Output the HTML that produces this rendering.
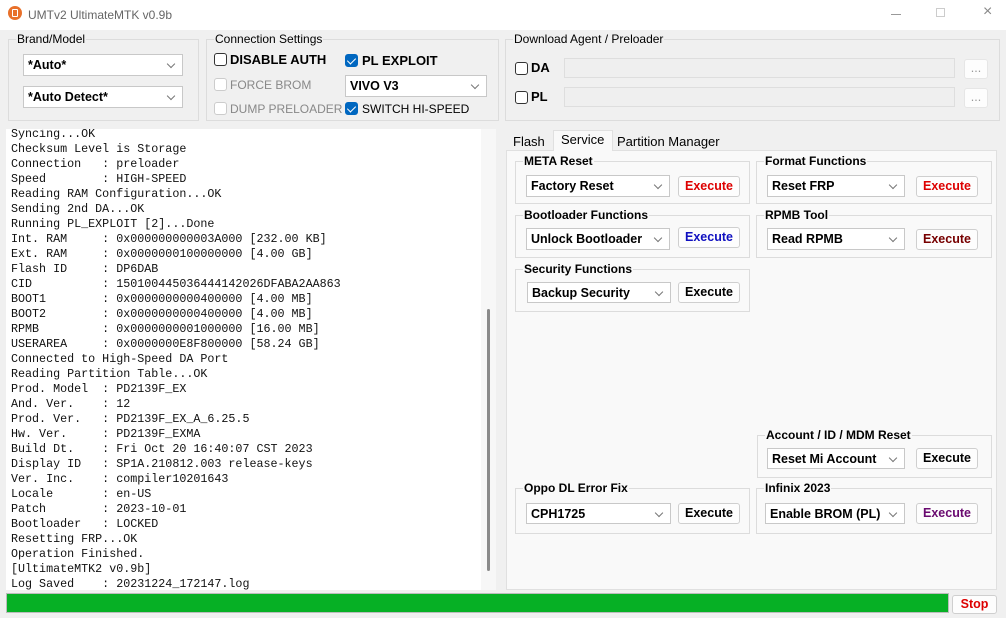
<!DOCTYPE html>
<html><head><meta charset="utf-8"><style>
*{box-sizing:border-box;margin:0;padding:0}
body{width:1006px;height:618px;background:#f0f0f0;font-family:"Liberation Sans",sans-serif;font-size:12px;position:relative;overflow:hidden;color:#000}
.a{position:absolute}
.grp{position:absolute;border:1px solid #dcdcdc}
.gt{position:absolute;top:-8px;left:7px;background:#f0f0f0;padding:0 1px;font-size:12px;line-height:14px;white-space:nowrap}
.wp .gt{background:#f9f9f9;font-weight:bold}
.cb{position:absolute;background:#fff;border:1px solid #c8c8c8;font-weight:bold;font-size:12.5px;line-height:20px;padding-left:4px;white-space:nowrap}
.cb:after{content:"";position:absolute;right:8px;top:6px;width:5px;height:5px;border-right:1px solid #777;border-bottom:1px solid #777;transform:rotate(45deg)}
.btn{position:absolute;background:#fdfdfd;border:1px solid #cfcfcf;border-radius:3px;font-weight:bold;font-size:12.5px;text-align:center;line-height:19px}
.chk{position:absolute;width:13px;height:13px;border:1px solid #333;border-radius:3px;background:#fff}
.chk.on{background:#0067c0;border-color:#0067c0}
.chk.on:after{content:"";position:absolute;left:3px;top:1px;width:4px;height:7px;border-right:1.5px solid #fff;border-bottom:1.5px solid #fff;transform:rotate(45deg)}
.chk.dis{border-color:#ccc}
.lbl{position:absolute;font-size:12px;white-space:nowrap;line-height:14px}
#log{position:absolute;left:6px;top:129px;width:490px;height:461px;background:#fff;overflow:hidden}
#log pre{position:absolute;left:5px;top:-2px;font-family:"Liberation Mono",monospace;font-size:11.7px;line-height:15px;color:#111}
</style></head><body>
<div class="a" style="left:0;top:0;width:1006px;height:30px;background:#fff"></div>
<div class="a" style="left:8px;top:6px;width:14px;height:14px;border-radius:50%;background:#e8702a"></div>
<div class="a" style="left:12px;top:9px;width:6px;height:8px;border:1.5px solid #fff;border-radius:1px"></div>
<div class="lbl" style="left:28px;top:8px;font-size:12px;color:#666">UMTv2 UltimateMTK v0.9b</div>
<div class="a" style="left:891px;top:14px;width:10px;height:1px;background:#999"></div>
<div class="a" style="left:936px;top:8px;width:9px;height:9px;border:1px solid #ccc"></div>
<div class="lbl" style="left:983px;top:5px;font-size:16px;color:#888">×</div>

<div class="grp" style="left:8px;top:39px;width:191px;height:82px"><span class="gt">Brand/Model</span></div>
<div class="cb" style="left:23px;top:54px;width:160px;height:22px">*Auto*</div>
<div class="cb" style="left:23px;top:86px;width:160px;height:22px">*Auto Detect*</div>

<div class="grp" style="left:206px;top:39px;width:293px;height:82px"><span class="gt">Connection Settings</span></div>
<div class="chk" style="left:214px;top:53px"></div><div class="lbl" style="left:230px;top:53px;font-weight:bold;font-size:13px">DISABLE AUTH</div>
<div class="chk dis" style="left:214px;top:78px"></div><div class="lbl" style="left:230px;top:78px;color:#888">FORCE BROM</div>
<div class="chk dis" style="left:214px;top:102px"></div><div class="lbl" style="left:230px;top:102px;color:#888">DUMP PRELOADER</div>
<div class="chk on" style="left:345px;top:54px"></div><div class="lbl" style="left:362px;top:54px;font-weight:bold;font-size:13px">PL EXPLOIT</div>
<div class="cb" style="left:345px;top:75px;width:142px;height:22px">VIVO V3</div>
<div class="chk on" style="left:345px;top:102px"></div><div class="lbl" style="left:362px;top:102px">SWITCH HI-SPEED</div>

<div class="grp" style="left:505px;top:39px;width:495px;height:82px"><span class="gt">Download Agent / Preloader</span></div>
<div class="chk" style="left:515px;top:62px"></div><div class="lbl" style="left:531px;top:61px;font-weight:bold;font-size:13px">DA</div>
<div class="chk" style="left:515px;top:91px"></div><div class="lbl" style="left:531px;top:90px;font-weight:bold;font-size:13px">PL</div>
<div class="a" style="left:564px;top:58px;width:391px;height:20px;border:1px solid #dedede;background:#efefef"></div>
<div class="a" style="left:564px;top:87px;width:391px;height:20px;border:1px solid #dedede;background:#efefef"></div>
<div class="btn" style="left:964px;top:59px;width:24px;height:20px;border-color:#e6e6e6;color:#999;font-weight:normal;line-height:16px">...</div>
<div class="btn" style="left:964px;top:88px;width:24px;height:20px;border-color:#e6e6e6;color:#999;font-weight:normal;line-height:16px">...</div>

<div id="log"><pre>Syncing...OK
Checksum Level is Storage
Connection   : preloader
Speed        : HIGH-SPEED
Reading RAM Configuration...OK
Sending 2nd DA...OK
Running PL_EXPLOIT [2]...Done
Int. RAM     : 0x000000000003A000 [232.00 KB]
Ext. RAM     : 0x0000000100000000 [4.00 GB]
Flash ID     : DP6DAB
CID          : 150100445036444142026DFABA2AA863
BOOT1        : 0x0000000000400000 [4.00 MB]
BOOT2        : 0x0000000000400000 [4.00 MB]
RPMB         : 0x0000000001000000 [16.00 MB]
USERAREA     : 0x0000000E8F800000 [58.24 GB]
Connected to High-Speed DA Port
Reading Partition Table...OK
Prod. Model  : PD2139F_EX
And. Ver.    : 12
Prod. Ver.   : PD2139F_EX_A_6.25.5
Hw. Ver.     : PD2139F_EXMA
Build Dt.    : Fri Oct 20 16:40:07 CST 2023
Display ID   : SP1A.210812.003 release-keys
Ver. Inc.    : compiler10201643
Locale       : en-US
Patch        : 2023-10-01
Bootloader   : LOCKED
Resetting FRP...OK
Operation Finished.
[UltimateMTK2 v0.9b]
Log Saved    : 20231224_172147.log</pre>
<div class="a" style="left:475px;top:0;width:15px;height:461px;background:#f7f7f7"></div>
<div class="a" style="left:481px;top:180px;width:3px;height:262px;background:#8a8a8a;border-radius:2px"></div>
</div>

<div class="a" style="left:506px;top:150px;width:491px;height:440px;background:#f9f9f9;border:1px solid #e0e0e0"></div>
<div class="a" style="left:553px;top:130px;width:60px;height:21px;background:#f9f9f9;border:1px solid #e0e0e0;border-bottom:none"></div>
<div class="lbl" style="left:513px;top:135px;font-size:13px">Flash</div>
<div class="lbl" style="left:561px;top:133px;font-size:13px">Service</div>
<div class="lbl" style="left:617px;top:135px;font-size:13px">Partition Manager</div>

<div class="wp">
<div class="grp" style="left:515px;top:161px;width:235px;height:43px"><span class="gt">META Reset</span></div>
<div class="cb" style="left:526px;top:175px;width:144px;height:22px">Factory Reset</div>
<div class="btn" style="left:678px;top:176px;width:62px;height:21px;color:#d00">Execute</div>

<div class="grp" style="left:756px;top:161px;width:236px;height:43px"><span class="gt">Format Functions</span></div>
<div class="cb" style="left:767px;top:175px;width:138px;height:22px">Reset FRP</div>
<div class="btn" style="left:916px;top:176px;width:62px;height:21px;color:#d00">Execute</div>

<div class="grp" style="left:515px;top:215px;width:235px;height:43px"><span class="gt">Bootloader Functions</span></div>
<div class="cb" style="left:526px;top:228px;width:144px;height:22px">Unlock Bootloader</div>
<div class="btn" style="left:678px;top:227px;width:62px;height:21px;color:#1010c0">Execute</div>

<div class="grp" style="left:756px;top:215px;width:236px;height:43px"><span class="gt">RPMB Tool</span></div>
<div class="cb" style="left:767px;top:228px;width:138px;height:22px">Read RPMB</div>
<div class="btn" style="left:916px;top:229px;width:62px;height:21px;color:#700">Execute</div>

<div class="grp" style="left:515px;top:269px;width:235px;height:43px"><span class="gt">Security Functions</span></div>
<div class="cb" style="left:527px;top:282px;width:144px;height:21px">Backup Security</div>
<div class="btn" style="left:678px;top:282px;width:62px;height:21px">Execute</div>

<div class="grp" style="left:757px;top:435px;width:235px;height:43px"><span class="gt">Account / ID / MDM Reset</span></div>
<div class="cb" style="left:767px;top:448px;width:138px;height:21px">Reset Mi Account</div>
<div class="btn" style="left:916px;top:448px;width:62px;height:21px">Execute</div>

<div class="grp" style="left:515px;top:488px;width:235px;height:46px"><span class="gt">Oppo DL Error Fix</span></div>
<div class="cb" style="left:526px;top:503px;width:145px;height:21px">CPH1725</div>
<div class="btn" style="left:678px;top:503px;width:62px;height:21px">Execute</div>

<div class="grp" style="left:756px;top:488px;width:236px;height:46px"><span class="gt">Infinix 2023</span></div>
<div class="cb" style="left:765px;top:503px;width:140px;height:21px">Enable BROM (PL)</div>
<div class="btn" style="left:916px;top:503px;width:62px;height:21px;color:#6a0a70">Execute</div>
</div>

<div class="a" style="left:6px;top:593px;width:943px;height:20px;border:1px solid #bcbcbc;background:#e6e6e6"></div>
<div class="a" style="left:7px;top:594px;width:941px;height:18px;background:#06b025"></div>
<div class="btn" style="left:952px;top:595px;width:45px;height:19px;color:#d00;line-height:17px">Stop</div>
</body></html>
